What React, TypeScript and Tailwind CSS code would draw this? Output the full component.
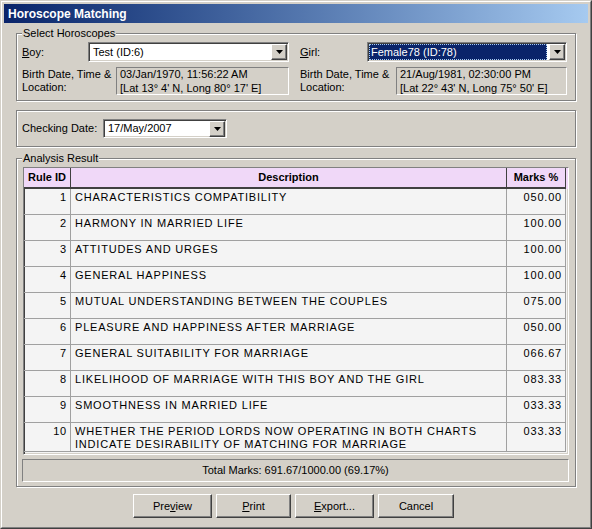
import React from 'react';

const rows = [
  { id: 1, desc: ['CHARACTERISTICS COMPATIBILITY'], marks: '050.00' },
  { id: 2, desc: ['HARMONY IN MARRIED LIFE'], marks: '100.00' },
  { id: 3, desc: ['ATTITUDES AND URGES'], marks: '100.00' },
  { id: 4, desc: ['GENERAL HAPPINESS'], marks: '100.00' },
  { id: 5, desc: ['MUTUAL UNDERSTANDING BETWEEN THE COUPLES'], marks: '075.00' },
  { id: 6, desc: ['PLEASURE AND HAPPINESS AFTER MARRIAGE'], marks: '050.00' },
  { id: 7, desc: ['GENERAL SUITABILITY FOR MARRIAGE'], marks: '066.67' },
  { id: 8, desc: ['LIKELIHOOD OF MARRIAGE WITH THIS BOY AND THE GIRL'], marks: '083.33' },
  { id: 9, desc: ['SMOOTHNESS IN MARRIED LIFE'], marks: '033.33' },
  {
    id: 10,
    desc: [
      'WHETHER THE PERIOD LORDS NOW OPERATING IN BOTH CHARTS',
      'INDICATE DESIRABILITY OF MATCHING FOR MARRIAGE',
    ],
    marks: '033.33',
  },
];

const raised =
  'border border-t-white border-l-white border-b-[#404040] border-r-[#404040] shadow-[inset_-1px_-1px_0_#808080,inset_1px_1px_0_#d4d0c8]';
const sunken =
  'border border-t-[#808080] border-l-[#808080] border-b-white border-r-white shadow-[inset_1px_1px_0_#404040,inset_-1px_-1px_0_#d4d0c8]';

function Group({ label, className, children }: { label?: string; className: string; children: React.ReactNode }) {
  return (
    <div className={`relative border border-[#808080] shadow-[inset_1px_1px_0_#fff,1px_1px_0_#fff] ${className}`}>
      {label && (
        <span className="absolute left-[5px] top-[-7px] bg-[#d4d0c8] px-[1px] leading-[13px]">{label}</span>
      )}
      {children}
    </div>
  );
}

function DropButton() {
  return (
    <div className={`flex h-[16px] w-[16px] shrink-0 items-center justify-center bg-[#d4d0c8] ${raised}`}>
      <svg width="7" height="4" viewBox="0 0 7 4">
        <path d="M0 0h7L3.5 4z" fill="#000" />
      </svg>
    </div>
  );
}

function Combo({ text, selected, className }: { text: string; selected?: boolean; className: string }) {
  return (
    <div className={`flex items-center bg-white p-[1px] ${sunken} ${className}`}>
      <div className="flex h-full min-w-0 flex-1 items-center pr-[2px]">
        {selected ? (
          <div className="flex h-full flex-1 items-center border border-dotted border-[#a6caf0] bg-[#0a246a] pl-[1px] text-white">
            {text}
          </div>
        ) : (
          <span className="pl-[3px]">{text}</span>
        )}
      </div>
      <DropButton />
    </div>
  );
}

function BirthBox({ l1, l2 }: { l1: string; l2: string }) {
  return (
    <div className="flex flex-1 flex-col justify-center border border-t-[#808080] border-l-[#808080] border-b-white border-r-white pl-[3px] leading-[14px]">
      <div>{l1}</div>
      <div>{l2}</div>
    </div>
  );
}

export default function App() {
  return (
    <div className="h-[529px] w-[592px] border border-t-[#d4d0c8] border-l-[#d4d0c8] border-b-[#404040] border-r-[#404040] bg-[#d4d0c8] font-['Liberation_Sans',Arial,sans-serif] text-[11px] text-black">
      <div className="flex h-full flex-col border border-t-white border-l-white border-b-[#808080] border-r-[#808080] p-[2px]">
        <div className="flex h-[19px] shrink-0 items-center bg-linear-to-r from-[#0a246a] to-[#a6caf0] pl-[4px] text-[12px] font-bold text-white">
          Horoscope Matching
        </div>

        <div className="flex flex-col px-[12px]">
          {/* Select Horoscopes */}
          <Group label="Select Horoscopes" className="mt-[10px] h-[68px] pl-[5px] pr-[6px] pt-[8px]">
            <div className="grid grid-cols-[267px_267px] gap-x-[11px]">
              <div className="flex h-[20px] items-center">
                <span className="w-[66px]">
                  <u>B</u>oy:
                </span>
                <Combo text="Test (ID:6)" className="h-[20px] flex-1" />
              </div>
              <div className="flex h-[20px] items-center">
                <span className="w-[67px]">
                  <u>G</u>irl:
                </span>
                <Combo text="Female78 (ID:78)" selected className="h-[20px] flex-1" />
              </div>
              <div className="mt-[5px] flex h-[28px]">
                <div className="w-[94px] pt-[1px] leading-[13px]">
                  Birth Date, Time &amp;
                  <br />
                  Location:
                </div>
                <BirthBox l1="03/Jan/1970, 11:56:22 AM" l2="[Lat 13° 4' N, Long 80° 17' E]" />
              </div>
              <div className="mt-[5px] flex h-[28px]">
                <div className="w-[96px] pt-[1px] leading-[13px]">
                  Birth Date, Time &amp;
                  <br />
                  Location:
                </div>
                <BirthBox l1="21/Aug/1981, 02:30:00 PM" l2="[Lat 22° 43' N, Long 75° 50' E]" />
              </div>
            </div>
          </Group>

          {/* Checking Date */}
          <Group className="mt-[9px] flex h-[37px] items-center pl-[5px]">
            <span className="w-[81px]">Checking Date:</span>
            <Combo text="17/May/2007" className="h-[19px] w-[124px]" />
          </Group>

          {/* Analysis Result */}
          <Group label="Analysis Result" className="mt-[11px] h-[329px] px-[6px] pt-[8px]">
            <div className={`h-[288px] overflow-hidden bg-[#f4f4f4] ${sunken}`}>
              <div className="grid h-[21px] grid-cols-[47px_436px_59px] bg-[#f0d8f8] font-bold">
                <div className="flex items-center justify-center border-r border-b-2 border-r-[#404040] border-b-[#404040]">Rule ID</div>
                <div className="flex items-center justify-center border-r border-b-2 border-r-[#404040] border-b-[#404040]">Description</div>
                <div className="flex items-center justify-center border-r border-b-2 border-r-[#404040] border-b-[#404040]">Marks %</div>
              </div>
              {rows.map((r) => (
                <div key={r.id} className="grid min-h-[26px] grid-cols-[47px_436px_59px] tracking-[0.8px]">
                  <div className="border-r border-b border-[#a0a0a0] pr-[3px] pt-[2px] text-right leading-[13px]">{r.id}</div>
                  <div className="border-r border-b border-[#a0a0a0] pl-[4px] pt-[2px] leading-[13px]">
                    {r.desc.map((d) => (
                      <div key={d}>{d}</div>
                    ))}
                  </div>
                  <div className="border-r border-b border-[#a0a0a0] pr-[3px] pt-[2px] text-right leading-[13px]">{r.marks}</div>
                </div>
              ))}
            </div>
            <div className="ml-[-1px] mt-[4px] flex h-[23px] items-center justify-center border border-t-[#808080] border-l-[#808080] border-b-white border-r-white">
              Total Marks: 691.67/1000.00 (69.17%)
            </div>
          </Group>

          {/* Buttons */}
          <div className="mt-[7px] flex gap-[4px] pl-[117px]">
            <button className={`h-[24px] w-[79px] bg-[#d4d0c8] ${raised}`}>
              Pre<u>v</u>iew
            </button>
            <button className={`h-[24px] w-[75px] bg-[#d4d0c8] ${raised}`}>
              <u>P</u>rint
            </button>
            <button className={`h-[24px] w-[79px] bg-[#d4d0c8] ${raised}`}>
              <u>E</u>xport...
            </button>
            <button className={`h-[24px] w-[76px] bg-[#d4d0c8] ${raised}`}>Cancel</button>
          </div>
        </div>
      </div>
    </div>
  );
}
